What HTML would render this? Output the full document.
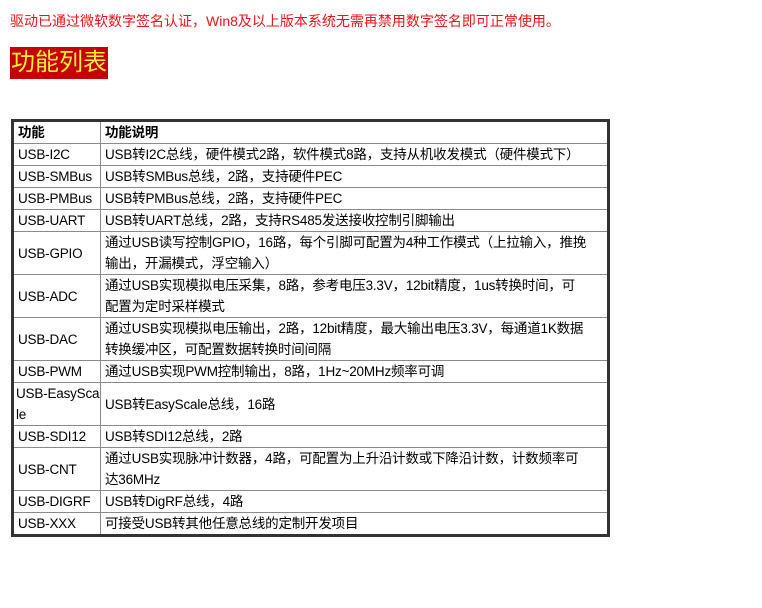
<!DOCTYPE html>
<html><head><meta charset="utf-8"><style>
body{margin:0;background:#fff;font-family:"Liberation Sans","Noto Sans CJK SC",sans-serif;font-size:14px;color:#000}
.note{position:absolute;left:10px;top:11px;color:#e8141a;font-size:14px;white-space:nowrap}
.h{position:absolute;left:10px;top:47px;height:32px;line-height:32px;background:#c40000;color:#ffef3a;font-size:24px;padding:0 1px}
table{position:absolute;left:11px;top:119px;width:599px;border-collapse:collapse;table-layout:fixed;border:3px solid #333}
td{border:1px solid #8a8a8a;padding:0 4px;line-height:21px;vertical-align:middle;word-break:break-all;font-size:13.5px;letter-spacing:-0.2px}
td:first-child{width:78px;white-space:nowrap;overflow:hidden}
tr.b td{font-weight:bold}
tr.s{height:22px}tr.d{height:43px}
</style></head><body>
<div class="note">驱动已通过微软数字签名认证，Win8及以上版本系统无需再禁用数字签名即可正常使用。</div>
<div class="h">功能列表</div>
<table>
<tr class="b s"><td>功能</td><td>功能说明</td></tr>
<tr class="s"><td>USB-I2C</td><td>USB转I2C总线，硬件模式2路，软件模式8路，支持从机收发模式（硬件模式下）</td></tr>
<tr class="s"><td>USB-SMBus</td><td>USB转SMBus总线，2路，支持硬件PEC</td></tr>
<tr class="s"><td>USB-PMBus</td><td>USB转PMBus总线，2路，支持硬件PEC</td></tr>
<tr class="s"><td>USB-UART</td><td>USB转UART总线，2路，支持RS485发送接收控制引脚输出</td></tr>
<tr class="d"><td>USB-GPIO</td><td>通过USB读写控制GPIO，16路，每个引脚可配置为4种工作模式（上拉输入，推挽<br>输出，开漏模式，浮空输入）</td></tr>
<tr class="d"><td>USB-ADC</td><td>通过USB实现模拟电压采集，8路，参考电压3.3V，12bit精度，1us转换时间，可<br>配置为定时采样模式</td></tr>
<tr class="d"><td>USB-DAC</td><td>通过USB实现模拟电压输出，2路，12bit精度，最大输出电压3.3V，每通道1K数据<br>转换缓冲区，可配置数据转换时间间隔</td></tr>
<tr class="s"><td>USB-PWM</td><td>通过USB实现PWM控制输出，8路，1Hz~20MHz频率可调</td></tr>
<tr class="d"><td style="padding-left:2px">USB-EasySca<br>le</td><td>USB转EasyScale总线，16路</td></tr>
<tr class="s"><td>USB-SDI12</td><td>USB转SDI12总线，2路</td></tr>
<tr class="d"><td>USB-CNT</td><td>通过USB实现脉冲计数器，4路，可配置为上升沿计数或下降沿计数，计数频率可<br>达36MHz</td></tr>
<tr class="s"><td>USB-DIGRF</td><td>USB转DigRF总线，4路</td></tr>
<tr class="s"><td>USB-XXX</td><td>可接受USB转其他任意总线的定制开发项目</td></tr>
</table>
</body></html>
